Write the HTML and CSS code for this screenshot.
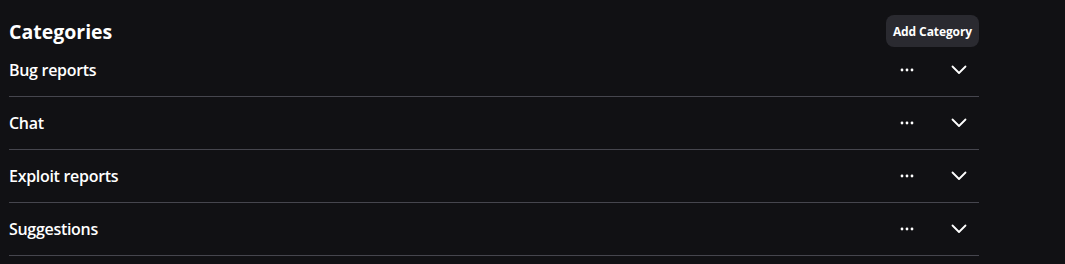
FILE: index.html
```html
<!DOCTYPE html>
<html lang="en">
<head>
<meta charset="UTF-8" />
<meta name="viewport" content="width=device-width, initial-scale=1" />
<title>Categories</title>
<link rel="stylesheet" href="styles.css">
</head>
<body>
  <div class="panel">
    <div class="panel-header">
      <h2 class="title">Categories</h2>
      <button class="add-btn">Add Category</button>
    </div>

    <div class="category">
      <span class="category-name">Bug reports</span>
      <div class="category-actions">
        <button class="icon-btn"><svg width="14" height="4" viewBox="0 0 14 4"><circle cx="2" cy="2" r="1.4"/><circle cx="7" cy="2" r="1.4"/><circle cx="12" cy="2" r="1.4"/></svg></button>
        <button class="icon-btn"><svg width="16" height="10" viewBox="0 0 16 10"><path d="M1.5 1.5 L8 8 L14.5 1.5"/></svg></button>
      </div>
    </div>
    <div class="category">
      <span class="category-name">Chat</span>
      <div class="category-actions">
        <button class="icon-btn"><svg width="14" height="4" viewBox="0 0 14 4"><circle cx="2" cy="2" r="1.4"/><circle cx="7" cy="2" r="1.4"/><circle cx="12" cy="2" r="1.4"/></svg></button>
        <button class="icon-btn"><svg width="16" height="10" viewBox="0 0 16 10"><path d="M1.5 1.5 L8 8 L14.5 1.5"/></svg></button>
      </div>
    </div>
    <div class="category">
      <span class="category-name">Exploit reports</span>
      <div class="category-actions">
        <button class="icon-btn"><svg width="14" height="4" viewBox="0 0 14 4"><circle cx="2" cy="2" r="1.4"/><circle cx="7" cy="2" r="1.4"/><circle cx="12" cy="2" r="1.4"/></svg></button>
        <button class="icon-btn"><svg width="16" height="10" viewBox="0 0 16 10"><path d="M1.5 1.5 L8 8 L14.5 1.5"/></svg></button>
      </div>
    </div>
    <div class="category">
      <span class="category-name">Suggestions</span>
      <div class="category-actions">
        <button class="icon-btn"><svg width="14" height="4" viewBox="0 0 14 4"><circle cx="2" cy="2" r="1.4"/><circle cx="7" cy="2" r="1.4"/><circle cx="12" cy="2" r="1.4"/></svg></button>
        <button class="icon-btn"><svg width="16" height="10" viewBox="0 0 16 10"><path d="M1.5 1.5 L8 8 L14.5 1.5"/></svg></button>
      </div>
    </div>
  </div>
</body>
</html>
```

FILE: styles.css
```css
html, body {
  margin: 0;
  padding: 0;
  height: 100%;
  background: #111114;
  color: #fff;
  font-family: 'Open Sans', 'Noto Sans', sans-serif;
  overflow: hidden;
}
.panel {
  width: 970px;
  margin-left: 9px;
  padding-top: 15px;
}
.panel-header {
  display: flex;
  align-items: center;
  justify-content: space-between;
  height: 32px;
  margin-bottom: -3px;
}
.title {
  margin: 0;
  font-size: 19.5px;
  font-weight: 700;
}
.add-btn {
  height: 32px;
  padding: 0 7px;
  background: #2a2a30;
  border: none;
  border-radius: 8px;
  color: #fff;
  font-family: inherit;
  font-size: 12px;
  font-weight: 700;
  letter-spacing: -0.1px;
  cursor: pointer;
}
.category {
  display: flex;
  align-items: center;
  justify-content: space-between;
  height: 52px;
  border-bottom: 1px solid #46464e;
}
.category-name {
  font-size: 16px;
  font-weight: 600;
  letter-spacing: -0.3px;
}
.category-actions {
  display: flex;
  gap: 12px;
}
.icon-btn {
  width: 40px;
  height: 32px;
  display: flex;
  align-items: center;
  justify-content: center;
  background: none;
  border: none;
  padding: 0;
  cursor: pointer;
}
.icon-btn svg {
  fill: #fff;
}
.icon-btn path {
  fill: none;
  stroke: #fff;
  stroke-width: 1.8;
  stroke-linecap: round;
  stroke-linejoin: round;
}
```
